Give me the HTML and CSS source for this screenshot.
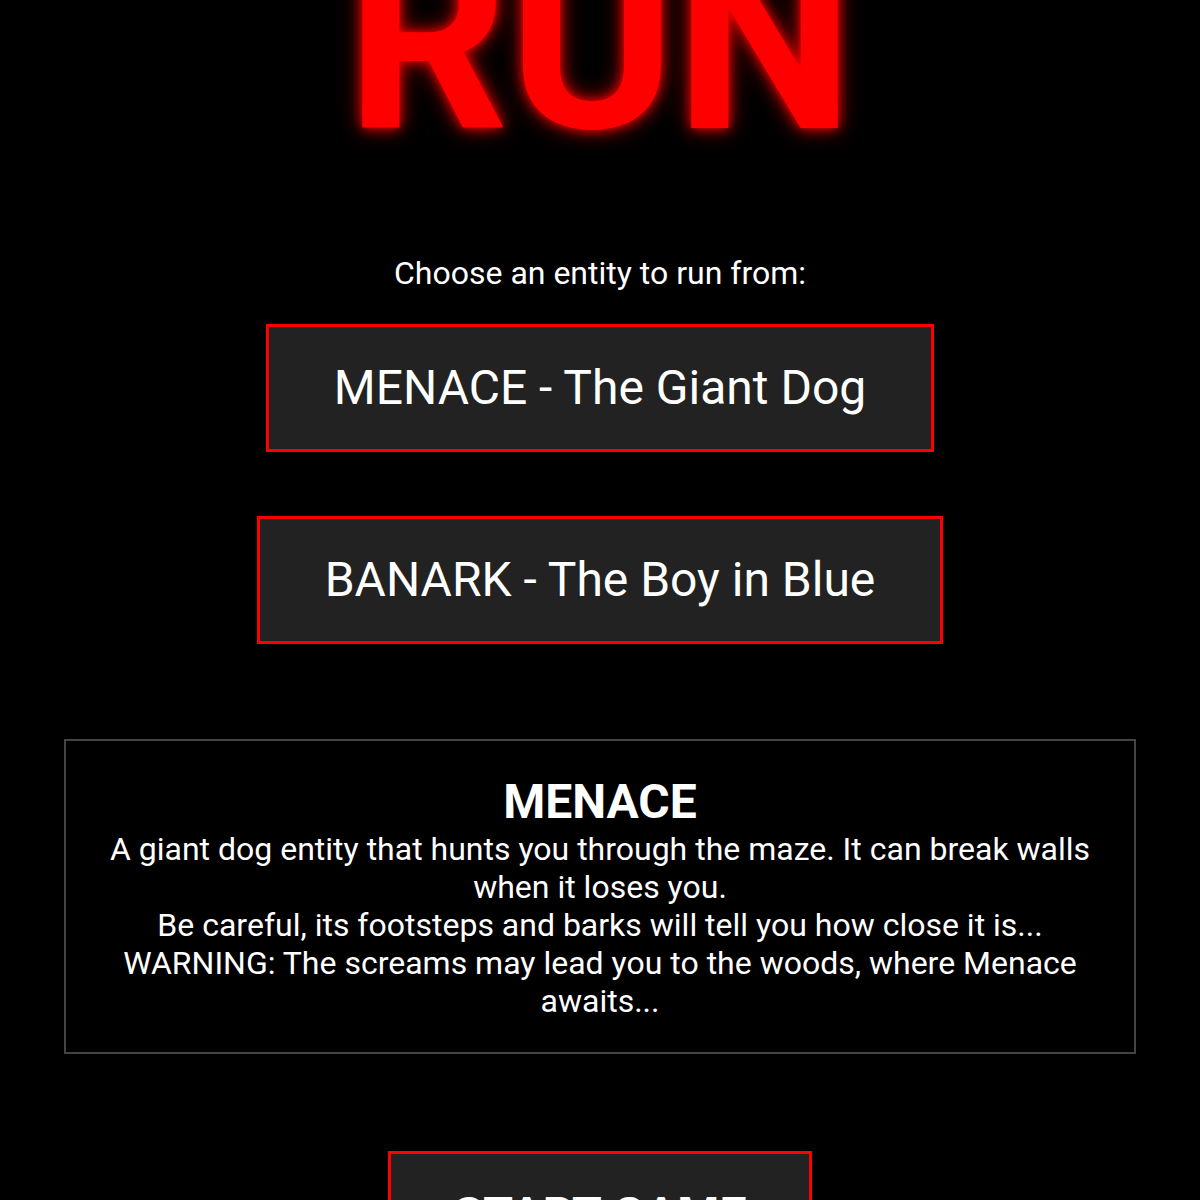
FILE: index.html
```html
<!DOCTYPE html>
<html lang="en">
<head>
    <meta charset="UTF-8">
    <meta name="viewport" content="width=device-width, initial-scale=1.0">
    <title>RUN</title>
    <link rel="stylesheet" href="styles.css">
</head>
<body>

    <h1 class="title">RUN</h1>

    <div id="menu">
        <p class="prompt">Choose an entity to run from:</p>
        <div class="entities">
            <button class="button entity">MENACE - The Giant Dog</button>
            <button class="button entity">BANARK - The Boy in Blue</button>
        </div>

        <div id="info">
            <h2>MENACE</h2>
            <p>A giant dog entity that hunts you through the maze. It can break walls when it loses you.<br>
            Be careful, its footsteps and barks will tell you how close it is...<br>
            WARNING: The screams may lead you to the woods, where Menace awaits...</p>
        </div>

        <button class="button start">START GAME</button>
    </div>

</body>
</html>
```

FILE: styles.css
```css
body {
    font-family: Roboto, "Liberation Sans", sans-serif;
    background-color: #000;
    color: #fff;
    text-align: center;
    margin: 0;
}

.title {
    font-size: 253px;
    font-weight: bold;
    line-height: 1;
    color: #ff0000;
    text-shadow: 0 0 12px #ff0000, 0 0 24px rgba(255, 0, 0, 0.6);
    margin: -85px 0 0 0;
}

#menu {
    display: flex;
    flex-direction: column;
    align-items: center;
}

.prompt {
    font-size: 32px;
    margin: 86px 0 32px 0;
}

.entities {
    display: flex;
    flex-direction: column;
    align-items: center;
    gap: 64px;
}

.button {
    font-family: Roboto, "Liberation Sans", sans-serif;
    font-size: 48px;
    line-height: 56px;
    color: #fff;
    background-color: #222;
    border: 3px solid #ff0000;
    padding: 33px 65px;
    cursor: pointer;
}

.button:hover {
    background-color: #333;
}

#info {
    box-sizing: border-box;
    width: calc(100% - 128px);
    margin: 95px 64px 97px 64px;
    padding: 32px 40px;
    border: 2px solid #444;
}

#info h2 {
    font-size: 48px;
    margin: 0;
}

#info p {
    font-size: 32px;
    margin: 0;
}

.start {
    font-weight: bold;
    padding: 33px 63px;
    margin-bottom: 60px;
}
```
